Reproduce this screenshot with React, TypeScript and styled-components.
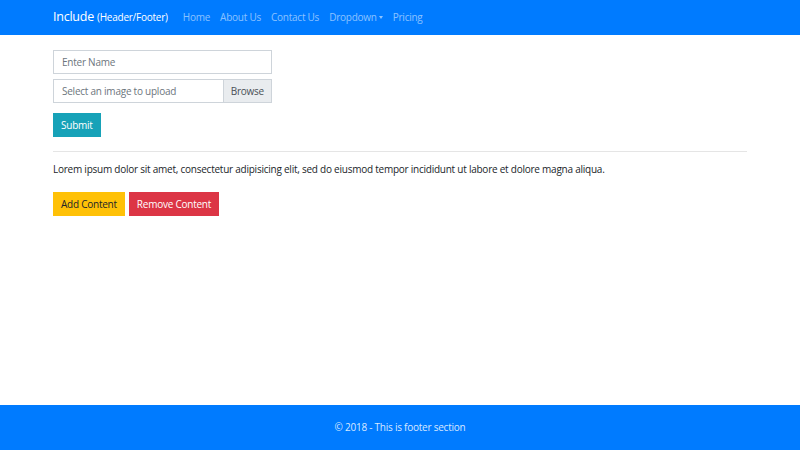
import React from "react";
import styled, { createGlobalStyle } from "styled-components";

const Global = createGlobalStyle`
  html, body { margin: 0; padding: 0; }
  body {
    font-family: "Open Sans", "Noto Sans", sans-serif;
    font-size: 10px;
    letter-spacing: -0.24px;
    line-height: 1.5;
    color: #212529;
    background: #fff;
  }
  * { box-sizing: border-box; }
`;

const Page = styled.div`
  width: 800px;
  height: 450px;
  display: flex;
  flex-direction: column;
`;

const Navbar = styled.nav`
  background: #007bff;
  height: 35px;
  display: flex;
  align-items: center;
  flex-shrink: 0;
`;

const Container = styled.div`
  width: 694px;
  margin: 0 auto;
`;

const NavInner = styled(Container)`
  display: flex;
  align-items: center;
`;

const Brand = styled.a`
  color: #fff;
  font-size: 12.5px;
  margin-right: 10px;
  white-space: nowrap;
  small { font-size: 10px; }
`;

const NavLink = styled.a<{ $caret?: boolean }>`
  color: rgba(255, 255, 255, 0.55);
  padding: 0 5px;
  white-space: nowrap;
  display: flex;
  align-items: center;
  &:after {
    content: ${(p) => (p.$caret ? "''" : "none")};
    display: inline-block;
    margin-left: 2px;
    border-top: 3px solid currentColor;
    border-left: 2.5px solid transparent;
    border-right: 2.5px solid transparent;
  }
`;

const Main = styled.main`
  flex: 1;
  padding-top: 15px;
`;

const Form = styled.form`
  width: 219px;
  display: flex;
  flex-direction: column;
`;

const Input = styled.div`
  height: 24px;
  border: 1px solid #ced4da;
  color: #6c757d;
  padding: 0 8px;
  display: flex;
  align-items: center;
  margin-bottom: 5px;
`;

const FileInput = styled.div`
  height: 24px;
  border: 1px solid #ced4da;
  display: flex;
  margin-bottom: 10px;
`;

const FileLabel = styled.span`
  flex: 1;
  color: #6c757d;
  padding: 0 8px;
  display: flex;
  align-items: center;
`;

const FileBtn = styled.span`
  background: #e9ecef;
  border-left: 1px solid #ced4da;
  color: #495057;
  padding: 0 7px;
  display: flex;
  align-items: center;
`;

const Button = styled.button<{ $bg: string; $fg: string }>`
  font: inherit;
  letter-spacing: inherit;
  height: 24px;
  padding: 0 8px;
  border: none;
  background: ${(p) => p.$bg};
  color: ${(p) => p.$fg};
  cursor: pointer;
`;

const SubmitRow = styled.div`
  display: flex;
`;

const Rule = styled.hr`
  border: 0;
  border-top: 1px solid rgba(0, 0, 0, 0.1);
  margin: 14px 0 10px;
`;

const Para = styled.p`
  margin: 0 0 15px;
`;

const Buttons = styled.div`
  display: flex;
  gap: 4px;
`;

const Footer = styled.footer`
  background: #007bff;
  height: 45px;
  color: rgba(255, 255, 255, 0.85);
  display: flex;
  align-items: center;
  justify-content: center;
  flex-shrink: 0;
`;

export default function App() {
  return (
    <Page>
      <Global />
      <Navbar>
        <NavInner>
          <Brand>
            Include <small>(Header/Footer)</small>
          </Brand>
          <NavLink>Home</NavLink>
          <NavLink>About Us</NavLink>
          <NavLink>Contact Us</NavLink>
          <NavLink $caret>Dropdown</NavLink>
          <NavLink>Pricing</NavLink>
        </NavInner>
      </Navbar>
      <Main>
        <Container>
          <Form>
            <Input>Enter Name</Input>
            <FileInput>
              <FileLabel>Select an image to upload</FileLabel>
              <FileBtn>Browse</FileBtn>
            </FileInput>
            <SubmitRow>
              <Button type="button" $bg="#17a2b8" $fg="#fff">Submit</Button>
            </SubmitRow>
          </Form>
          <Rule />
          <Para>
            Lorem ipsum dolor sit amet, consectetur adipisicing elit, sed do eiusmod tempor incididunt ut labore et dolore magna aliqua.
          </Para>
          <Buttons>
            <Button type="button" $bg="#ffc107" $fg="#212529">Add Content</Button>
            <Button type="button" $bg="#dc3545" $fg="#fff">Remove Content</Button>
          </Buttons>
        </Container>
      </Main>
      <Footer>© 2018 - This is footer section</Footer>
    </Page>
  );
}
